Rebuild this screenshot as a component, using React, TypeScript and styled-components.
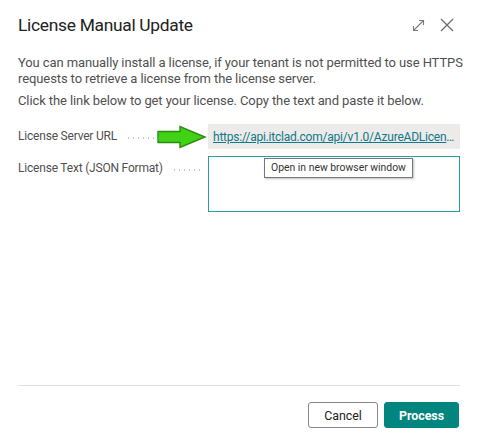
import { createGlobalStyle } from 'styled-components'
import styled from 'styled-components'

const GlobalStyle = createGlobalStyle`
  html, body {
    margin: 0;
    padding: 0;
    background: #ffffff;
  }
  body {
    font-family: Roboto, "Open Sans", sans-serif;
    color: #505050;
  }
`

const Dialog = styled.div`
  width: 480px;
  height: 448px;
  box-sizing: border-box;
  padding: 0 20px 0 18px;
  display: flex;
  flex-direction: column;
`

const Header = styled.div`
  height: 50px;
  display: flex;
  align-items: center;
  justify-content: space-between;
`

const Title = styled.h1`
  margin: 0;
  font-size: 17.4px;
  font-weight: 400;
  letter-spacing: -0.3px;
  color: #212121;
`

const HeaderTools = styled.div`
  display: flex;
  gap: 15px;
  align-items: center;
  padding-right: 6px;
`

const IconButton = styled.button`
  border: none;
  background: transparent;
  padding: 0;
  display: flex;
  cursor: pointer;
`

const Intro = styled.p`
  margin: 0 -6px 0 0;
  font-size: 13px;
  letter-spacing: -0.1px;
  line-height: 16px;
  color: #505050;
  padding-top: 5px;
`

const Hint = styled(Intro)`
  padding-top: 6px;
`

const Fields = styled.div`
  display: grid;
  grid-template-columns: 190px 252px;
  row-gap: 7px;
  margin-top: 15px;
`

const Label = styled.div`
  position: relative;
  display: flex;
  align-items: flex-start;
  font-size: 12px;
  letter-spacing: -0.2px;
  color: #505050;
  padding-top: 5px;
  white-space: nowrap;
`

// dotted leader between a caption and its value
const Leader = styled.span`
  position: relative;
  z-index: 1;
  flex: 1;
  height: 2px;
  margin: 8px 8px 0 9px;
  background-image: radial-gradient(circle, rgba(150, 150, 150, 0.55) 0.8px, transparent 1.1px);
  background-size: 5px 2px;
  background-repeat: repeat-x;
`

const LinkBox = styled.div`
  height: 25px;
  background: #ecebea;
  display: flex;
  align-items: center;
  padding: 0 5px;
  overflow: hidden;
`

const Link = styled.a`
  font-size: 12px;
  letter-spacing: -0.22px;
  color: #0e7886;
  text-decoration: underline;
  white-space: nowrap;
  overflow: hidden;
  text-overflow: ellipsis;
`

const TextArea = styled.div`
  position: relative;
  height: 54px;
  border: 1px solid #2e9c9c;
`

const Tooltip = styled.div`
  position: absolute;
  top: 1px;
  left: 55px;
  padding: 2px 6px 3px 6px;
  background: #ffffff;
  border: 1px solid #767676;
  box-shadow: 1px 1px 2px rgba(0, 0, 0, 0.25);
  font-size: 10.4px;
  color: #333333;
  white-space: nowrap;
`

const Arrow = styled.svg`
  position: absolute;
  left: 139px;
  top: 1px;
`

const Spacer = styled.div`
  flex: 1;
`

const Footer = styled.div`
  border-top: 1px solid #e1e1e1;
  padding: 16px 1px 20px 0;
  display: flex;
  justify-content: flex-end;
  gap: 6px;
`

const ActionButton = styled.button<{ primary?: boolean }>`
  height: 26px;
  min-width: ${p => (p.primary ? '75px' : '70px')};
  box-sizing: border-box;
  border-radius: 3px;
  font-family: Roboto, "Open Sans", sans-serif;
  font-size: 12.4px;
  font-weight: ${p => (p.primary ? 700 : 400)};
  color: ${p => (p.primary ? '#ffffff' : '#212121')};
  background: ${p => (p.primary ? '#00857f' : '#ffffff')};
  border: 1px solid ${p => (p.primary ? '#00857f' : '#8a8886')};
  cursor: pointer;
`

export default function App() {
  return (
    <>
      <GlobalStyle />
      <Dialog>
        <Header>
          <Title>License Manual Update</Title>
          <HeaderTools>
            <IconButton aria-label="Expand">
              <svg width="13" height="13" viewBox="0 0 13 13" fill="none" stroke="#7a7a7a" strokeWidth="1.1">
                <path d="M1.5 11.5 L11.5 1.5" />
                <path d="M7 1.5 H11.5 V6" />
                <path d="M1.5 7 V11.5 H6" />
              </svg>
            </IconButton>
            <IconButton aria-label="Close">
              <svg width="14" height="14" viewBox="0 0 14 14" fill="none" stroke="#6e6e6e" strokeWidth="1.3">
                <path d="M1 1 L13 13 M13 1 L1 13" />
              </svg>
            </IconButton>
          </HeaderTools>
        </Header>

        <Intro>
          You can manually install a license, if your tenant is not permitted to use HTTPS requests to retrieve a
          license from the license server.
        </Intro>
        <Hint>Click the link below to get your license. Copy the text and paste it below.</Hint>

        <Fields>
          <Label>
            License Server URL
            <Leader />
            <Arrow width="50" height="24" viewBox="0 0 50 24">
              <path
                d="M1 6.5 H23 V1.5 L48 12 L23 22.5 V17.5 H1 Z"
                fill="#3fd411"
                stroke="#2a8a12"
                strokeWidth="1.4"
                strokeLinejoin="miter"
              />
            </Arrow>
          </Label>
          <LinkBox>
            <Link href="#">https://api.itclad.com/api/v1.0/AzureADLicenseServer/license</Link>
          </LinkBox>

          <Label>
            License Text (JSON Format)
            <Leader />
          </Label>
          <TextArea>
            <Tooltip>Open in new browser window</Tooltip>
          </TextArea>
        </Fields>

        <Spacer />

        <Footer>
          <ActionButton>Cancel</ActionButton>
          <ActionButton primary>Process</ActionButton>
        </Footer>
      </Dialog>
    </>
  )
}
